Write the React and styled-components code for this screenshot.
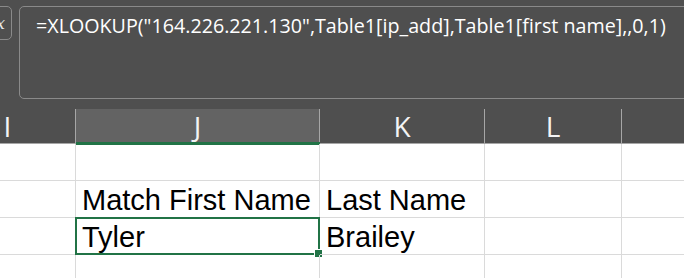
import * as React from "react"
import styled, { createGlobalStyle } from "styled-components"

const GlobalStyle = createGlobalStyle`
  html, body {
    margin: 0;
    padding: 0;
    background: #ffffff;
    overflow: hidden;
  }
`

const Page = styled.div`
  width: 684px;
  height: 278px;
  overflow: hidden;
  background: #ffffff;
`

const FormulaBar = styled.div`
  height: 109px;
  box-sizing: border-box;
  padding-top: 6px;
  background: #4f4f4f;
  display: flex;
  align-items: flex-start;
  gap: 7px;
`

const FxButton = styled.div`
  width: 34px;
  height: 34px;
  margin-left: -22px;
  box-sizing: border-box;
  border: 1px solid #8a8a8a;
  border-radius: 5px;
  display: flex;
  align-items: center;
  justify-content: flex-end;
  padding-right: 6px;
  color: #e8e8e8;
  font-family: "DejaVu Serif", serif;
  font-style: italic;
  font-size: 17px;
`

const FormulaBox = styled.div`
  flex: 1;
  height: 93px;
  margin-right: -12px;
  box-sizing: border-box;
  border: 1px solid #8a8a8a;
  border-radius: 5px;
  padding: 6px 0 0 16px;
  color: #ffffff;
  font-family: "Open Sans", sans-serif;
  font-size: 19.7px;
  line-height: 26px;
  white-space: nowrap;
`

const Sheet = styled.div`
  margin-left: -60px;
  width: 880px;
`

const columns = "136px 244px 165px 137px 198px"

const HeaderRow = styled.div`
  display: grid;
  grid-template-columns: ${columns};
  height: 35px;
  background: #4f4f4f;
  box-sizing: border-box;
  border-bottom: 1px solid #a6a6a6;
`

const HeaderCell = styled.div`
  position: relative;
  box-sizing: border-box;
  border-right: 1px solid #a6a6a6;
  background: ${(p) => (p.$active ? "#636363" : "transparent")};
  color: #f4f4f4;
  font-family: "Open Sans", sans-serif;
  font-size: 28px;
  line-height: 34px;
  text-align: center;
  &::after {
    content: "";
    display: ${(p) => (p.$active ? "block" : "none")};
    position: absolute;
    left: 0;
    right: -1px;
    bottom: -2px;
    height: 3px;
    background: #217346;
  }
`

const Row = styled.div`
  display: grid;
  grid-template-columns: ${columns};
  height: 37px;
`

const Cell = styled.div`
  position: relative;
  box-sizing: border-box;
  border-right: 1px solid #dadada;
  border-bottom: 1px solid #dadada;
  padding: 3px 0 0 6px;
  color: #000000;
  font-family: "Liberation Sans", Arial, sans-serif;
  font-size: 29px;
  line-height: 33px;
  white-space: nowrap;
  overflow: visible;
`

const Selection = styled.div`
  position: absolute;
  left: -1px;
  top: -1px;
  right: -1px;
  bottom: -1px;
  border: 2px solid #217346;
  pointer-events: none;
`

const FillHandle = styled.div`
  position: absolute;
  right: -5px;
  bottom: -5px;
  width: 7px;
  height: 7px;
  background: #217346;
  border: 1px solid #ffffff;
`

const headers = ["I", "J", "K", "L", "M"]

const rows = [
  ["", "", "", "", ""],
  ["", "Match First Name", "Last Name", "", ""],
  ["", "Tyler", "Brailey", "", ""],
  ["", "", "", "", ""],
]

const App = () => (
  <Page>
    <GlobalStyle />
    <FormulaBar>
      <FxButton>fx</FxButton>
      <FormulaBox>
        =XLOOKUP("164.226.221.130",Table1[ip_add],Table1[first name],,0,1)
      </FormulaBox>
    </FormulaBar>
    <Sheet>
      <HeaderRow>
        {headers.map((h) => (
          <HeaderCell key={h} $active={h === "J"}>
            {h}
          </HeaderCell>
        ))}
      </HeaderRow>
      {rows.map((row, r) => (
        <Row key={r}>
          {row.map((value, c) => (
            <Cell key={c}>
              {value}
              {r === 2 && c === 1 && (
                <Selection>
                  <FillHandle />
                </Selection>
              )}
            </Cell>
          ))}
        </Row>
      ))}
    </Sheet>
  </Page>
)

export default App
